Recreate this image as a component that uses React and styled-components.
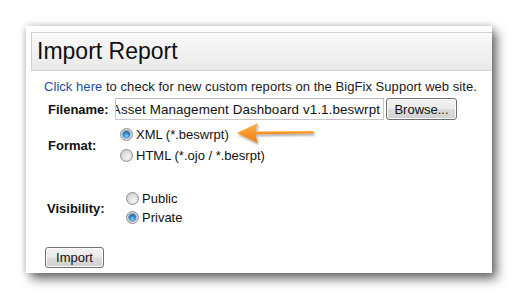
import React from "react";
import styled, { createGlobalStyle } from "styled-components";

const Global = createGlobalStyle`
  html, body { margin: 0; padding: 0; background: #ffffff; }
  body { font-family: "Liberation Sans", Arial, sans-serif; color: #111; }
`;

const Page = styled.div`
  width: 518px;
  height: 299px;
  padding: 26px 0 0 26px;
  box-sizing: border-box;
  position: relative;
  overflow: hidden;
`;

const Panel = styled.div`
  width: 466px;
  height: 247px;
  background: #fff;
  box-shadow: 5px 6px 10px rgba(0, 0, 0, 0.55), 0 0 7px rgba(0, 0, 0, 0.22);
  display: flex;
  flex-direction: column;
`;

const Header = styled.div`
  margin: 6px 0 0 5px;
  height: 37px;
  border-top: 1px solid #d2d2d2;
  border-left: 1px solid #d2d2d2;
  border-bottom: 1px solid #d2d2d2;
  background: linear-gradient(#fafafa, #e9e9e9);
  display: flex;
  align-items: center;
  padding-left: 5px;
`;

const Title = styled.h1`
  margin: 0;
  font-size: 23px;
  font-weight: normal;
  color: #111;
`;

const Body = styled.div`
  display: flex;
  flex-direction: column;
  padding-left: 18px;
  font-size: 13px;
`;

const Note = styled.div`
  margin-top: 8px;
  line-height: 16px;
  color: #1a1a1a;
  letter-spacing: 0.05px;
`;

const Link = styled.a`
  color: #1d4f9e;
  text-decoration: none;
`;

const Row = styled.div`
  display: flex;
  align-items: center;
  margin-top: ${(p) => p.$top}px;
  padding-left: ${(p) => p.$indent || 0}px;
`;

const Label = styled.div`
  font-weight: bold;
  width: ${(p) => p.$w}px;
  color: #111;
`;

const FileBox = styled.div`
  width: 269px;
  height: 22px;
  box-sizing: border-box;
  border: 1px solid #c8c8c8;
  border-top-color: #b5b5b5;
  background: #fff;
  display: flex;
  align-items: center;
  justify-content: flex-end;
  overflow: hidden;
  white-space: nowrap;
  padding-right: 3px;
  font-size: 13.4px;
  letter-spacing: 0.1px;
  color: #111;
`;

const Button = styled.div`
  height: ${(p) => p.$h || 22}px;
  width: ${(p) => p.$w}px;
  margin-left: ${(p) => p.$ml || 0}px;
  box-sizing: border-box;
  border: 1px solid #707070;
  border-radius: 3px;
  background: linear-gradient(#f2f2f2 0%, #ebebeb 48%, #dddddd 52%, #cfcfcf 100%);
  box-shadow: inset 0 0 0 1px #fcfcfc;
  display: flex;
  align-items: center;
  justify-content: center;
  font-size: 13px;
  color: #111;
`;

const Options = styled.div`
  display: flex;
  flex-direction: column;
`;

const Option = styled.div`
  display: flex;
  align-items: center;
  height: ${(p) => p.$h}px;
  gap: 3px;
  color: #111;
`;

const Radio = styled.span`
  width: 13px;
  height: 13px;
  box-sizing: border-box;
  border-radius: 50%;
  border: 1px solid #8f8f8f;
  background: radial-gradient(circle at 60% 65%, #f4f4f4 0%, #dcdcdc 55%, #c4c4c4 100%);
  display: flex;
  align-items: center;
  justify-content: center;
  flex: none;

  &::after {
    content: "";
    display: ${(p) => (p.$on ? "block" : "none")};
    width: 7px;
    height: 7px;
    border-radius: 50%;
    background: radial-gradient(circle at 50% 70%, #8ad6ff 0%, #2a8ad0 45%, #0c4f87 100%);
    box-shadow: 0 0 0 1px rgba(30, 60, 100, 0.35);
  }
`;

const ArrowSvg = styled.svg`
  position: absolute;
  left: 232px;
  top: 119px;
  overflow: visible;
`;

function Arrow() {
  return (
    <ArrowSvg width="90" height="30" viewBox="0 0 90 30">
      <defs>
        <linearGradient id="og" x1="0" y1="0" x2="0" y2="1">
          <stop offset="0" stopColor="#ffb04a" />
          <stop offset="1" stopColor="#f07d0c" />
        </linearGradient>
        <filter id="sh" x="-20%" y="-50%" width="140%" height="200%">
          <feDropShadow dx="1" dy="2" stdDeviation="1.2" floodColor="#000" floodOpacity="0.35" />
        </filter>
      </defs>
      <g filter="url(#sh)">
        <path d="M22 12.4 L81 12 Q83 13.3 81 14.6 L22 15.2 Z" fill="url(#og)" />
        <path d="M5 14 L26 4 Q21.5 14 26 24 Z" fill="url(#og)" />
      </g>
    </ArrowSvg>
  );
}

export default function App() {
  return (
    <>
      <Global />
      <Page>
        <Panel>
          <Header>
            <Title>Import Report</Title>
          </Header>
          <Body>
            <Note>
              <Link href="#">Click here</Link> to check for new custom reports on the BigFix Support web site.
            </Note>
            <Row $top={3} $indent={4}>
              <Label $w={67}>Filename:</Label>
              <FileBox>Asset Management Dashboard v1.1.beswrpt</FileBox>
              <Button $w={71} $ml={2}>Browse...</Button>
            </Row>
            <Row $top={4} $indent={4}>
              <Label $w={72}>Format:</Label>
              <Options>
                <Option $h={21}>
                  <Radio $on />
                  XML (*.beswrpt)
                </Option>
                <Option $h={21}>
                  <Radio />
                  HTML (*.ojo / *.besrpt)
                </Option>
              </Options>
            </Row>
            <Row $top={23} $indent={3}>
              <Label $w={79}>Visibility:</Label>
              <Options>
                <Option $h={19}>
                  <Radio />
                  Public
                </Option>
                <Option $h={19}>
                  <Radio $on />
                  Private
                </Option>
              </Options>
            </Row>
            <Row $top={20} $indent={1}>
              <Button $w={59} $h={21}>Import</Button>
            </Row>
          </Body>
        </Panel>
        <Arrow />
      </Page>
    </>
  );
}
